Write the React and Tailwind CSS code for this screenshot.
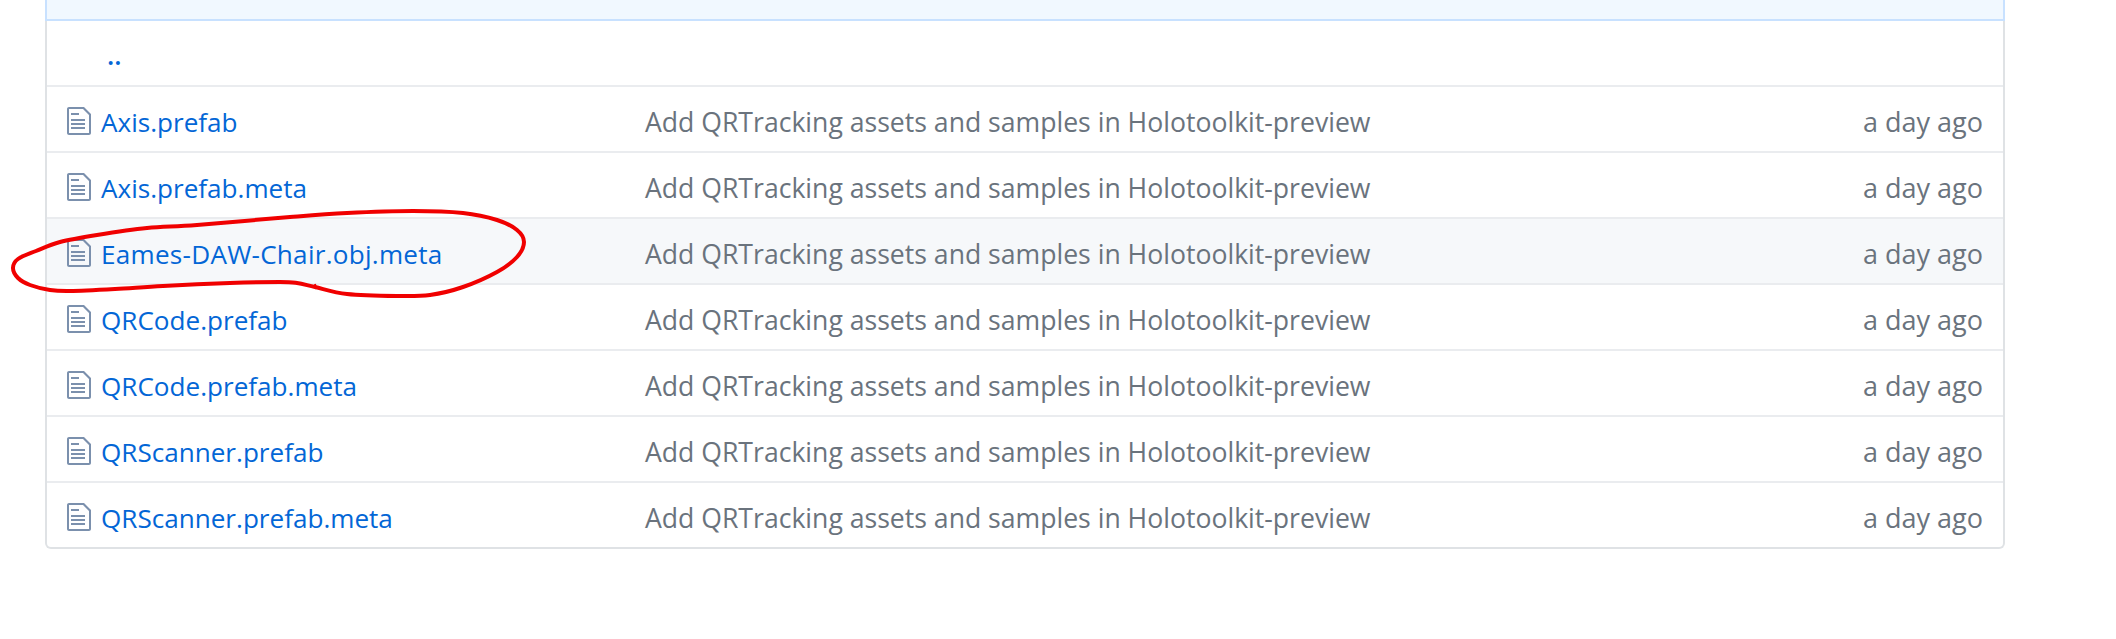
const files = ['Axis.prefab', 'Axis.prefab.meta', 'Eames-DAW-Chair.obj.meta', 'QRCode.prefab', 'QRCode.prefab.meta', 'QRScanner.prefab', 'QRScanner.prefab.meta']

// points of the hand drawn circle, joined into a smooth closed line
const circle = [[60, 242], [36, 251], [18, 259], [13, 268], [18, 278], [30, 285], [50, 290], [70, 291], [115, 289], [163, 286], [230, 283], [280, 282], [297, 283], [315, 287], [347, 294], [397, 296], [430, 295], [463, 287], [497, 272], [517, 257], [524, 242], [517, 230], [497, 220], [463, 213], [413, 211], [347, 213], [290, 217], [197, 225], [147, 228], [97, 235]]

function smoothPath(pts) {
  const n = pts.length
  let d = `M${pts[0][0]} ${pts[0][1]}`
  for (let i = 0; i < n; i++) {
    const p0 = pts[(i - 1 + n) % n], p1 = pts[i], p2 = pts[(i + 1) % n], p3 = pts[(i + 2) % n]
    const c1 = [p1[0] + (p2[0] - p0[0]) / 6, p1[1] + (p2[1] - p0[1]) / 6]
    const c2 = [p2[0] - (p3[0] - p1[0]) / 6, p2[1] - (p3[1] - p1[1]) / 6]
    d += ` C${c1[0]} ${c1[1]} ${c2[0]} ${c2[1]} ${p2[0]} ${p2[1]}`
  }
  return d + ' Z'
}

function FileIcon() {
  return (
    <svg viewBox="0 0 12 16" className="w-[24px] h-[32px] mt-[4px] shrink-0" fill="#7b90ad">
      <path fillRule="evenodd" d="M6 5H2V4h4v1zM2 8h7V7H2v1zm0 2h7V9H2v1zm0 2h7v-1H2v1zm10-7.5V14c0 .55-.45 1-1 1H1c-.55 0-1-.45-1-1V2c0-.55.45-1 1-1h7.5L12 4.5zM11 5L8 2H1v12h10V5z" />
    </svg>
  )
}

export default function App() {
  return (
    <div className="relative w-[2116px] h-[639px] bg-white overflow-hidden font-['Open_Sans',sans-serif]">
      <div className="ml-[45px] w-[1960px] rounded-b-[6px] border-x-2 border-b-2 border-[#dfe2e5]">
        <div className="h-[21px] -mx-[2px] bg-[#f1f8ff] border-x-2 border-b-2 border-[#c8e1ff]" />
        <div className="h-[64px] pl-[60px] pt-[6px] flex items-center">
          <a className="text-[#0366d6] text-[26.5px] font-semibold">..</a>
        </div>
        {files.map(name => {
          const marked = name.startsWith('Eames')
          return (
            <div
              key={name}
              className={`h-[66px] border-t-2 border-[#eaecef] pl-[20px] pr-[20px] flex items-center ${marked ? 'bg-[#f6f8fa]' : ''}`}
            >
              <FileIcon />
              <a className={`ml-[10px] w-[544px] shrink-0 pt-[7px] text-[#0366d6] text-[26.1px] ${marked ? 'tracking-[0.26px]' : ''}`}>{name}</a>
              <span className="flex-1 pt-[7px] text-[#6a737d] text-[26.6px]">Add QRTracking assets and samples in Holotoolkit-preview</span>
              <span className="pt-[7px] text-[#6a737d] text-[27px]">a day ago</span>
            </div>
          )
        })}
      </div>
      {/* red circle drawn over the screenshot */}
      <svg className="absolute left-0 top-0 pointer-events-none" width="2116" height="639" fill="none" stroke="#f00000">
        <path d={smoothPath(circle)} strokeWidth="4" />
        <path d="M315 284 L316 289" strokeWidth="2" />
      </svg>
    </div>
  )
}
